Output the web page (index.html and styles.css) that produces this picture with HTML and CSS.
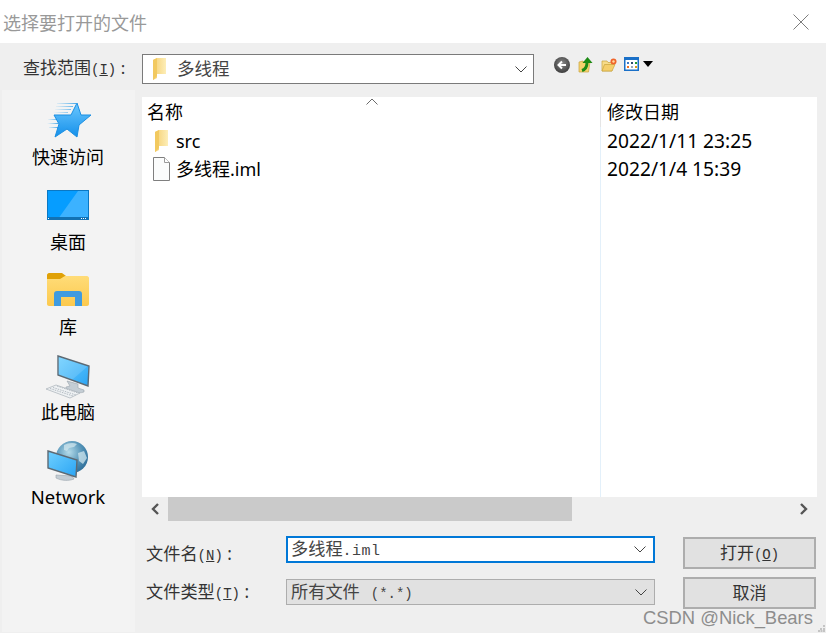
FILE: index.html
```html
<!DOCTYPE html>
<html lang="zh-CN">

<head>
    <meta charset="UTF-8">
    <meta name="viewport" content="width=device-width, initial-scale=1.0">
    <title>选择要打开的文件</title>

    <link rel="stylesheet" href="styles.css">
</head>

<body>
    <svg class="defs" width="0" height="0">
        <defs>
            <linearGradient id="starFill" x1="0" y1="0" x2="0" y2="1">
                <stop offset="0" stop-color="#6cc8ff" />
                <stop offset="1" stop-color="#1590ea" />
            </linearGradient>
            <linearGradient id="speedLine" x1="0" y1="0" x2="1" y2="0">
                <stop offset="0" stop-color="#7cc4f0" stop-opacity="0" />
                <stop offset="1" stop-color="#4aa8e8" />
            </linearGradient>
            <linearGradient id="screenFill" x1="0" y1="0" x2="1" y2="1">
                <stop offset="0" stop-color="#6fd0ff" />
                <stop offset="1" stop-color="#2aa4f4" />
            </linearGradient>
            <linearGradient id="folderFill" x1="0" y1="0" x2="0" y2="1">
                <stop offset="0" stop-color="#ffdc78" />
                <stop offset="1" stop-color="#fcc94e" />
            </linearGradient>
            <linearGradient id="smallFolder" x1="0" y1="0" x2="1" y2="0">
                <stop offset="0" stop-color="#f5cf70" />
                <stop offset="1" stop-color="#fdeeb8" />
            </linearGradient>
            <radialGradient id="globeFill" cx="0.4" cy="0.35" r="0.8">
                <stop offset="0" stop-color="#b5dcea" />
                <stop offset="0.55" stop-color="#4f8fb4" />
                <stop offset="1" stop-color="#1f5f8c" />
            </radialGradient>
            <radialGradient id="backFill" cx="0.5" cy="0.4" r="0.7">
                <stop offset="0" stop-color="#8a8a8a" />
                <stop offset="1" stop-color="#303030" />
            </radialGradient>
        </defs>
    </svg>

    <div class="dialog">
        <div class="titlebar">
            <span class="title">选择要打开的文件</span>
            <svg class="close" width="16" height="16" viewBox="0 0 16 16">
                <path d="M.5.5l15 15M15.500.5l-15 15" stroke="#7d7d7d" fill="none" />
            </svg>
        </div>

        <div class="toolbar">
            <label class="look-label">查找范围<span class="key">(<u>I</u>)</span> :</label>
            <div class="look-box">
                <svg width="16" height="22" viewBox="0 0 16 22">
                    <path d="M1 2l4-2h9v16H5v4l-4 2z" fill="url(#smallFolder)" />
                    <path d="M1 2l4-2v18l-4 4z" fill="#f2c95f" />
                </svg>
                <span class="look-text">多线程</span>
                <svg class="chevron" width="12" height="7" viewBox="0 0 12 7">
                    <path d="M.5.5L6 6 11.500.5" stroke="#444" fill="none" />
                </svg>
            </div>
            <div class="tools">
                <svg width="16" height="16" viewBox="0 0 16 16">
                    <circle cx="8" cy="8" r="8" fill="url(#backFill)" />
                    <path d="M12 8H5M8 4.500L4.500 8 8 11.500" stroke="#fff" stroke-width="2" fill="none" />
                </svg>
                <svg class="tool-up" width="15" height="16" viewBox="0 0 15 16">
                    <path d="M1 5l4-1v1h7l-1.500 10H1z" fill="#f5d26e" stroke="#c9a33e" stroke-width=".7" />
                    <path d="M4 13.500c3-1 5-3 5-8" stroke="#1c8a14" stroke-width="3" fill="none" />
                    <path d="M9.500 0L14.500 6h-10z" fill="#1c8a14" />
                </svg>
                <svg class="tool-new" width="16" height="14" viewBox="0 0 16 14">
                    <path d="M1 3h5l1 1.500h4V13H1z" fill="#f7dc8b" stroke="#c9a33e" stroke-width=".7" />
                    <path d="M1 13l2.500-6.500H14L11 13z" fill="#f5cf6c" stroke="#c9a33e" stroke-width=".7" />
                    <circle cx="12.500" cy="3.500" r="3" fill="#f0642a" />
                    <circle cx="12.500" cy="3.500" r="1.200" fill="#ffd9a0" />
                </svg>
                <div class="tool-view">
                    <svg width="15" height="14" viewBox="0 0 15 14">
                        <rect x=".75" y=".75" width="13.500" height="12.500" fill="#fff" stroke="#1a70c8" stroke-width="1.500" />
                        <rect x="0" y="0" width="15" height="3" fill="#1a70c8" />
                        <rect x="3" y="5" width="2" height="2" fill="#3f78c4" />
                        <rect x="7" y="5" width="2" height="2" fill="#2e4d70" />
                        <rect x="11" y="5" width="2" height="2" fill="#1f9a30" />
                        <rect x="3" y="9" width="2" height="2" fill="#f07020" />
                        <rect x="7" y="9" width="2" height="2" fill="#9aa8bc" />
                        <rect x="11" y="9" width="2" height="2" fill="#e09a10" />
                    </svg>
                    <span class="tool-arrow"></span>
                </div>
            </div>
        </div>

        <div class="main">
            <nav class="places">
                <div class="place">
                    <svg width="48" height="48" viewBox="0 0 48 48">
                        <g stroke="url(#speedLine)" stroke-width="1">
                            <path d="M13 7.500h19M12 10.500h17M11 13.500h16M9 16.500h15" />
                            <path d="M4 23.500h10M3 27.500h11M5 31.500h9" />
                        </g>
                        <path d="M33 7l-6 12H10l5 9-4 13 12-8 10 8 2-12 12-10H37z" fill="url(#starFill)" stroke="#1b8fe2" stroke-linejoin="round" />
                    </svg>
                    <span>快速访问</span>
                </div>
                <div class="place">
                    <svg width="48" height="48" viewBox="0 0 48 48">
                        <rect x="3.500" y="9.500" width="41" height="29" fill="#069dff" stroke="#0a78c4" />
                        <path d="M14 38L34 10h10v28z" fill="#3cb2ff" />
                        <rect x="4" y="36" width="40" height="3" fill="#1272b4" />
                        <path d="M4 37.500h1M37 37.500h1M39 37.500h1M41 37.500h1" stroke="#fff" />
                    </svg>
                    <span>桌面</span>
                </div>
                <div class="place">
                    <svg width="48" height="48" viewBox="0 0 48 48">
                        <path d="M3 9c0-1 1-2 2-2h13l4 3v4H3z" fill="#e0a106" />
                        <path d="M3 13h13l5-3h22c1 0 2 1 2 2v26c0 1-1 2-2 2H5c-1 0-2-1-2-2z" fill="url(#folderFill)" />
                        <path d="M10 40V28c0-2 1-3 3-3h22c2 0 3 1 3 3v12h-7v-9H17v9z" fill="#3f9be0" />
                    </svg>
                    <span>库</span>
                </div>
                <div class="place">
                    <svg width="48" height="48" viewBox="0 0 48 48">
                        <path d="M23 30l11 3v4l6 2v2c-6 2-12 0-18-3v-2l4-1z" fill="#c4cdd4" stroke="#9aa4ac" stroke-width=".6" />
                        <path d="M14 5l31 10-1 20-30-11z" fill="url(#screenFill)" stroke="#5d6a74" stroke-width="1.400" />
                        <path d="M14.500 6l29 9.500-15 13-14-5z" fill="#fff" fill-opacity=".14" />
                        <path d="M2 38l10-4 24 8-10 5z" fill="#eef1f3" stroke="#a7b0b7" stroke-width=".7" />
                        <path d="M6 37.500l23 7.500M9 36.500l23 7.500M13 35l21 7" stroke="#b3bbc2" stroke-dasharray="1.500 1" />
                    </svg>
                    <span>此电脑</span>
                </div>
                <div class="place">
                    <svg width="48" height="48" viewBox="0 0 48 48">
                        <circle cx="28" cy="21" r="16" fill="url(#globeFill)" />
                        <path d="M20 9c4-2 9-3 13-1l-3 3-5 1-2 3-3-1zM34 17l6-2 3 7-4 6-4-3z" fill="#cfe6ee" fill-opacity=".75" />
                        <path d="M12 39l16 1 2 3c-5 2-12 2-18-1z" fill="#c4cdd4" stroke="#9aa4ac" stroke-width=".6" />
                        <path d="M4 15l29 9-1 17-28-9z" fill="url(#screenFill)" stroke="#5d6a74" stroke-width="1.400" />
                    </svg>
                    <span class="place-latin">Network</span>
                </div>
            </nav>

            <div class="content">
                <div class="list">
                    <div class="col col-name">
                        <div class="head">名称
                            <svg class="sort" width="12" height="7" viewBox="0 0 12 7">
                                <path d="M.5 6.500L6 1l5.500 5.500" stroke="#6a6a6a" fill="none" />
                            </svg>
                        </div>
                        <div class="row">
                            <svg width="14" height="22" viewBox="0 0 14 22">
                                <path d="M1 2l4-2h9v16H5v4l-4 2z" fill="url(#smallFolder)" />
                                <path d="M1 2l4-2v18l-4 4z" fill="#f2c95f" />
                            </svg>
                            <span>src</span>
                        </div>
                        <div class="row row-file">
                            <svg width="17" height="24" viewBox="0 0 17 24">
                                <path d="M.5.500h11l5 5v18H.5z" fill="#fbfcfc" stroke="#7f7f7f" />
                                <path d="M11.500.5v5h5" fill="#fff" stroke="#9a9a9a" />
                            </svg>
                            <span>多线程.iml</span>
                        </div>
                    </div>
                    <div class="col col-date">
                        <div class="head">修改日期</div>
                        <div class="cell">2022/1/11 23:25</div>
                        <div class="cell">2022/1/4 15:39</div>
                    </div>
                </div>

                <div class="hscroll">
                    <div class="scroll-btn">
                        <svg width="10" height="12" viewBox="0 0 10 12">
                            <path d="M8 1L3 6l5 5" stroke="#555" stroke-width="2.400" fill="none" />
                        </svg>
                    </div>
                    <div class="thumb"></div>
                    <div class="scroll-btn scroll-right">
                        <svg width="10" height="12" viewBox="0 0 10 12">
                            <path d="M2 1l5 5-5 5" stroke="#555" stroke-width="2.400" fill="none" />
                        </svg>
                    </div>
                </div>

                <div class="form">
                    <label class="form-label">文件名<span class="key">(<u>N</u>)</span> :</label>
                    <div class="field field-name">
                        <span class="field-text">多线程<span class="mono">.iml</span></span>
                        <svg class="chevron" width="12" height="7" viewBox="0 0 12 7">
                            <path d="M.5.5L6 6 11.500.5" stroke="#444" fill="none" />
                        </svg>
                    </div>
                    <button class="btn btn-open">打开<span class="key">(<u>O</u>)</span></button>

                    <label class="form-label form-label-type">文件类型<span class="key">(<u>T</u>)</span> :</label>
                    <div class="field field-type">
                        <span class="field-text">所有文件<span class="mono mono-filter">(*.*)</span></span>
                        <svg class="chevron" width="12" height="7" viewBox="0 0 12 7">
                            <path d="M.5.5L6 6 11.500.5" stroke="#444" fill="none" />
                        </svg>
                    </div>
                    <button class="btn">取消</button>
                </div>
            </div>
        </div>

        <div class="watermark">CSDN @Nick_Bears</div>
        <svg class="grip" width="7" height="7" viewBox="0 0 7 7">
            <path d="M5 0h2v2H5zM2 3h2v2H2zM5 3h2v2H5zM0 5h2v2H0zM2.500 5h2v2h-2zM5 5h2v2H5z" fill="#c4c4c4" />
        </svg>
    </div>
</body>

</html>
```

FILE: styles.css
```css
* {
    box-sizing: border-box;
}
body {
    margin: 0;
    background: #fff;
    font-family: "Noto Sans", "Noto Sans CJK SC", sans-serif;
    color: #000;
}
.defs {
    position: absolute;
}
svg {
    display: block;
    flex: none;
}
.dialog {
    position: relative;
    width: 826px;
    height: 633px;
    background: #efefef;
    overflow: hidden;
}

/* title */
.titlebar {
    display: flex;
    justify-content: space-between;
    align-items: center;
    height: 43px;
    margin-right: -2px;
    padding: 0 19px 0 3px;
    background: #fff;
}
.title {
    font-size: 18px;
    color: #999;
}

/* look in row */
.toolbar {
    display: flex;
    height: 47px;
    padding: 11px 0 0 23px;
}
.look-label {
    width: 119px;
    height: 29px;
    line-height: 27px;
    font-size: 17px;
    color: #333;
    white-space: nowrap;
}
.key {
    font-family: "Liberation Mono", monospace;
    font-size: 14px;
}
.look-box {
    display: flex;
    align-items: center;
    width: 392px;
    height: 30px;
    padding: 0 6px 0 9px;
    background: #fff;
    border: 1px solid #7a7a7a;
}
.look-text {
    margin: -3px 0 0 9px;
    font-size: 17.5px;
    color: #444;
}
.chevron {
    margin-left: auto;
}
.tools {
    display: flex;
    align-items: flex-start;
    margin-left: 20px;
    padding-top: 3px;
}
.tool-up {
    margin-left: 8px;
}
.tool-new {
    margin: 1px 0 0 8px;
}
.tool-view {
    display: flex;
    align-items: center;
    margin-left: 7px;
}
.tool-arrow {
    margin-left: 4px;
    border-style: solid;
    border-width: 6px 5.500px 0;
    border-color: #000 transparent transparent;
}

/* places and list */
.main {
    display: flex;
    height: 543px;
    padding-left: 2px;
}
.places {
    width: 133px;
    height: 542px;
    padding: 6px 1px 0 0;
    background: #f3f3f3;
}
.place {
    display: flex;
    flex-direction: column;
    align-items: center;
    height: 85px;
    font-size: 18px;
    line-height: 26px;
}
.place-latin {
    font-size: 18.500px;
}
.content {
    width: 675px;
    margin: 7px 0 0 7px;
}
.list {
    display: flex;
    height: 400px;
    background: #fff;
}
.col-name {
    position: relative;
    width: 458px;
}
.col-date {
    flex: 1;
    border-left: 1px solid #e3f0fa;
}
.head {
    height: 30px;
    padding-left: 5px;
    font-size: 18px;
    line-height: 30px;
}
.col-date .head {
    margin-left: -1px;
    padding-left: 6px;
    border-left: 1px solid #e5e5e5;
}
.sort {
    position: absolute;
    top: 1px;
    left: 224px;
}
.row {
    display: grid;
    grid-template-columns: 22px auto;
    justify-content: start;
    align-items: center;
    height: 28px;
    padding-left: 12px;
    font-size: 18px;
}
.row-file svg {
    margin-left: -1px;
}
.row-file span {
    margin-top: -2px;
}
.cell {
    height: 28px;
    padding-left: 6px;
    font-size: 19.200px;
    line-height: 28px;
}

/* scrollbar */
.hscroll {
    display: flex;
    height: 24px;
}
.scroll-btn {
    display: flex;
    align-items: center;
    justify-content: center;
    width: 26px;
}
.scroll-right {
    margin-left: auto;
}
.thumb {
    width: 404px;
    background: #cacaca;
}

/* file name and type */
.form {
    display: grid;
    grid-template-columns: 140px 369px 161px;
    grid-template-rows: 33px 32px;
    row-gap: 8px;
    margin-top: 15px;
    padding-left: 4px;
}
.form-label {
    padding-top: 5px;
    font-size: 17.200px;
    line-height: 26px;
    color: #333;
    white-space: nowrap;
}
.form-label-type {
    padding-top: 2px;
}
.field {
    display: flex;
    align-items: center;
    padding: 0 7px 0 4px;
    font-size: 17.200px;
    color: #444;
    white-space: nowrap;
}
.field-text {
    margin-top: -4px;
}
.mono {
    font-family: "Liberation Mono", monospace;
    font-size: 15px;
    letter-spacing: .5px;
}
.mono-filter {
    margin-left: 11px;
    font-size: 14px;
    letter-spacing: 0;
}
.field-name {
    height: 27px;
    background: #fff;
    border: 2px solid #0078d7;
    padding-left: 3px;
}
.field-type {
    height: 26px;
    margin-top: 2px;
    background: #e1e1e1;
    border: 1px solid #adadad;
}
.btn {
    height: 32px;
    margin-left: 28px;
    padding: 0 0 4px;
    background: #e1e1e1;
    border: 2px solid #adadad;
    font-family: inherit;
    font-size: 17px;
    color: #333;
}
.btn-open {
    margin-top: 1px;
}

.watermark {
    position: absolute;
    left: 643px;
    top: 606px;
    font-family: "Liberation Sans", sans-serif;
    font-size: 18.400px;
    line-height: 24px;
    color: #8d8d8d;
    white-space: nowrap;
}
.grip {
    position: absolute;
    right: 1px;
    bottom: 1px;
}
```
